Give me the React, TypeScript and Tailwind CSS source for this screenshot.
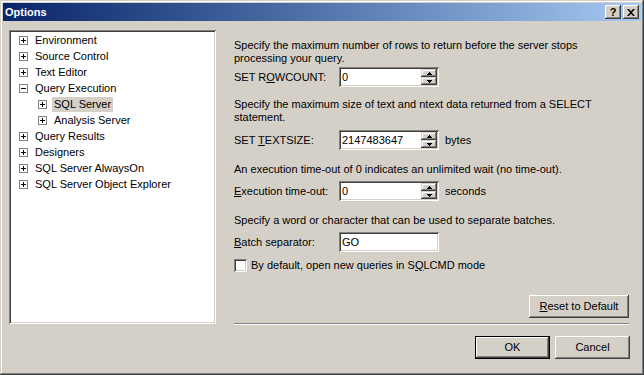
import React from "react";

const FONT = { fontFamily: '"Liberation Sans", Arial, sans-serif' };

function Caret({ up }: { up: boolean }) {
  return (
    <svg width="5" height="3" viewBox="0 0 5 3" className="block">
      {up ? <path d="M2 0h1v1h1v1h1v1H0V2h1V1h1z" fill="#000" /> : <path d="M0 0h5v1H4v1H3v1H2V2H1V1H0z" fill="#000" />}
    </svg>
  );
}

function Spin() {
  return (
    <div className="absolute right-[2px] top-[2px] flex flex-col w-[16px] h-[16px]">
      <div className="h-[8px] bg-[#d4d0c8] shadow-[inset_-1px_-1px_#404040,inset_1px_1px_#d4d0c8,inset_-2px_-2px_#808080,inset_2px_2px_#fff] flex items-center justify-center">
        <Caret up />
      </div>
      <div className="h-[8px] bg-[#d4d0c8] shadow-[inset_-1px_-1px_#404040,inset_1px_1px_#d4d0c8,inset_-2px_-2px_#808080,inset_2px_2px_#fff] flex items-center justify-center">
        <Caret up={false} />
      </div>
    </div>
  );
}

function Field({ value, spin }: { value: string; spin?: boolean }) {
  return (
    <div className="relative w-[100px] h-[20px] bg-white shadow-[inset_1px_1px_#808080,inset_-1px_-1px_#fff,inset_2px_2px_#404040,inset_-2px_-2px_#d4d0c8] flex items-center pl-[3px] text-[11px] text-black">
      {value}
      {spin && <Spin />}
    </div>
  );
}

function Box({ open }: { open?: boolean }) {
  return (
    <div className="relative w-[9px] h-[9px] border border-[#808080] bg-white shrink-0">
      <div className="absolute left-[1px] top-[3px] w-[5px] h-[1px] bg-black" />
      {!open && <div className="absolute left-[3px] top-[1px] w-[1px] h-[5px] bg-black" />}
    </div>
  );
}

function Item({ label, level, open, sel }: { label: string; level: number; open?: boolean; sel?: boolean }) {
  return (
    <div className={`flex items-center h-[16px] ${level === 0 ? "pl-[8px]" : "pl-[27px]"}`}>
      <Box open={open} />
      <span className={`ml-[5px] px-[2px] leading-[15px] h-[15px] ${sel ? "bg-[#d4d0c8]" : ""}`}>{label}</span>
    </div>
  );
}

const raised =
  "bg-[#d4d0c8] shadow-[inset_-1px_-1px_#404040,inset_1px_1px_#fff,inset_-2px_-2px_#808080,inset_2px_2px_#d4d0c8]";

export default function App() {
  return (
    <div
      style={FONT}
      className="w-[644px] h-[375px] bg-[#d4d0c8] p-[3px] text-[11px] text-black shadow-[inset_-1px_-1px_#404040,inset_1px_1px_#d4d0c8,inset_-2px_-2px_#808080,inset_2px_2px_#fff] flex flex-col"
    >
      <div className="h-[18px] bg-gradient-to-r from-[#0a246a] to-[#a6caf0] flex items-center pl-[2px] pr-[2px]">
        <span className="text-white font-bold text-[11px] flex-1">Options</span>
        <div className={`w-[16px] h-[14px] ${raised} flex items-center justify-center font-bold text-[11px] leading-none`}>?</div>
        <div className={`ml-[2px] w-[16px] h-[14px] ${raised} flex items-center justify-center`}>
          <svg width="8" height="7" viewBox="0 0 8 7">
            <path d="M0 0h2l2 2.2L6 0h2L5 3.5 8 7H6L4 4.8 2 7H0l3-3.5z" fill="#000" />
          </svg>
        </div>
      </div>
      <div className="flex flex-row">
        <div className="ml-[6px] mt-[9px] w-[207px] h-[294px] bg-white p-[2px] shadow-[inset_1px_1px_#808080,inset_-1px_-1px_#fff,inset_2px_2px_#404040,inset_-2px_-2px_#d4d0c8]">
          <Item label="Environment" level={0} />
          <Item label="Source Control" level={0} />
          <Item label="Text Editor" level={0} />
          <Item label="Query Execution" level={0} open />
          <Item label="SQL Server" level={1} sel />
          <Item label="Analysis Server" level={1} />
          <Item label="Query Results" level={0} />
          <Item label="Designers" level={0} />
          <Item label="SQL Server AlwaysOn" level={0} />
          <Item label="SQL Server Object Explorer" level={0} />
        </div>
        <div className="ml-[18px] w-[396px] flex flex-col leading-[13px] pt-[18px]">
          <p>
            Specify the maximum number of rows to return before the server stops
            <br />
            processing your query.
          </p>
          <div className="mt-[2px] flex items-center">
            <span className="w-[105px]">
              SET R<u>O</u>WCOUNT:
            </span>
            <Field value="0" spin />
          </div>
          <p className="mt-[11px]">
            Specify the maximum size of text and ntext data returned from a SELECT
            <br />
            statement.
          </p>
          <div className="mt-[6px] flex items-center">
            <span className="w-[105px]">
              SET <u>T</u>EXTSIZE:
            </span>
            <Field value="2147483647" spin />
            <span className="ml-[6px]">bytes</span>
          </div>
          <p className="mt-[13px]">An execution time-out of 0 indicates an unlimited wait (no time-out).</p>
          <div className="mt-[5px] flex items-center">
            <span className="w-[105px]">
              <u>E</u>xecution time-out:
            </span>
            <Field value="0" spin />
            <span className="ml-[6px]">seconds</span>
          </div>
          <p className="mt-[13px]">Specify a word or character that can be used to separate batches.</p>
          <div className="mt-[5px] flex items-center">
            <span className="w-[105px]">
              <u>B</u>atch separator:
            </span>
            <Field value="GO" />
          </div>
          <div className="mt-[7px] flex items-center">
            <div className="w-[13px] h-[13px] bg-white shadow-[inset_1px_1px_#808080,inset_-1px_-1px_#fff,inset_2px_2px_#404040,inset_-2px_-2px_#d4d0c8]" />
            <span className="ml-[4px]">
              By default, open new queries in S<u>Q</u>LCMD mode
            </span>
          </div>
          <div className="mt-[23px] flex justify-end pr-[1px]">
            <div className={`w-[100px] h-[23px] ${raised} flex items-center justify-center`}>
              <span>
                <u>R</u>eset to Default
              </span>
            </div>
          </div>
          <div className="mt-[5px] mr-[1px] h-[2px] border-t border-t-[#808080] border-b border-b-white" />
          <div className="mt-[11px] flex justify-end">
            <div className="w-[75px] h-[23px] border border-black">
              <div className={`w-full h-full ${raised} flex items-center justify-center`}>OK</div>
            </div>
            <div className={`ml-[5px] w-[75px] h-[23px] ${raised} flex items-center justify-center`}>Cancel</div>
          </div>
        </div>
      </div>
    </div>
  );
}
